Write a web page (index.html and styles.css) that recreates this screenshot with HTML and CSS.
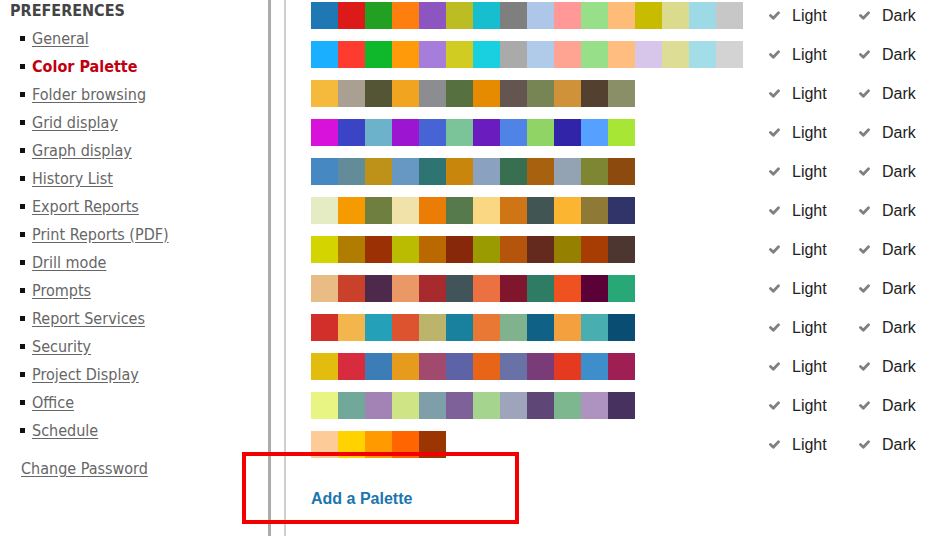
FILE: index.html
```html
<!DOCTYPE html>
<html>
<head>
<meta charset="utf-8">
<link rel="stylesheet" href="styles.css">
</head>
<body>
<div class="page">
  <aside class="sidebar">
    <div class="title">PREFERENCES</div>
    <ul class="nav">
      <li><span class="dot"></span><a href="#">General</a></li>
      <li class="active"><span class="dot"></span><a href="#">Color Palette</a></li>
      <li><span class="dot"></span><a href="#">Folder browsing</a></li>
      <li><span class="dot"></span><a href="#">Grid display</a></li>
      <li><span class="dot"></span><a href="#">Graph display</a></li>
      <li><span class="dot"></span><a href="#">History List</a></li>
      <li><span class="dot"></span><a href="#">Export Reports</a></li>
      <li><span class="dot"></span><a href="#">Print Reports (PDF)</a></li>
      <li><span class="dot"></span><a href="#">Drill mode</a></li>
      <li><span class="dot"></span><a href="#">Prompts</a></li>
      <li><span class="dot"></span><a href="#">Report Services</a></li>
      <li><span class="dot"></span><a href="#">Security</a></li>
      <li><span class="dot"></span><a href="#">Project Display</a></li>
      <li><span class="dot"></span><a href="#">Office</a></li>
      <li><span class="dot"></span><a href="#">Schedule</a></li>
    </ul>
    <a class="change" href="#">Change Password</a>
  </aside>
  <main class="content" id="content">
    <div id="rows"></div>
    <a class="add" href="#">Add a Palette</a>
  </main>
  <div class="highlight"></div>
</div>
<script src="app.js"></script>
</body>
</html>
```

FILE: styles.css
```css
html, body {
  margin: 0;
  padding: 0;
  background: #fff;
}
.page {
  display: flex;
  min-height: 536px;
  height: 536px;
  overflow: hidden;
  position: relative;
}
.sidebar {
  width: 268px;
  flex: none;
  border-right: 3px solid #ababab;
  font-family: "DejaVu Sans Condensed", "DejaVu Sans", sans-serif;
  font-stretch: condensed;
  font-size: 16px;
  color: #666;
}
.title {
  padding-left: 10px;
  font-weight: bold;
  color: #444;
  line-height: 21px;
}
.nav {
  list-style: none;
  margin: 3px 0 0;
  padding: 0 0 0 20px;
}
.nav li {
  display: flex;
  align-items: center;
  gap: 7px;
  height: 28px;
}
.dot {
  width: 5px;
  height: 5px;
  background: #111;
  flex: none;
}
.nav a {
  color: #666;
  text-decoration: underline;
  text-underline-offset: 2px;
}
.nav li.active a {
  color: #c00010;
  font-weight: bold;
  text-decoration: none;
}
.change {
  display: block;
  margin: 11px 0 0 21px;
  line-height: 28px;
  color: #666;
  text-decoration: underline;
  text-underline-offset: 2px;
}
.content {
  margin-left: 13px;
  border-left: 2px solid #cfcfcf;
  padding-left: 25px;
  flex: 1;
  font-family: "Liberation Sans", Arial, sans-serif;
  font-size: 16px;
}
.row {
  display: flex;
  align-items: flex-start;
  height: 39px;
}
.swatches {
  display: flex;
  width: 458px;
  margin-top: 2px;
}
.sw {
  width: 27px;
  height: 27px;
  flex: none;
}
.opt {
  display: flex;
  align-items: center;
  width: 90px;
  height: 27px;
  margin-top: 2px;
  color: #222;
}
.opt svg {
  width: 11px;
  height: 9px;
  margin-right: 12px;
  flex: none;
}
.add {
  display: block;
  margin-top: 21px;
  line-height: 20px;
  font-weight: bold;
  color: #1b75ae;
  text-decoration: none;
  width: max-content;
}
.highlight {
  position: absolute;
  left: 242px;
  top: 452px;
  width: 269px;
  height: 64px;
  border: 4px solid #f20000;
}
```

FILE: app.js
```js
var palettes = [
  ["#1f77b4","#dc1a1a","#22a022","#ff7f0e","#8c55c0","#bcbd22","#17becf","#7f7f7f","#aec7e8","#ff9896","#98df8a","#ffbb78","#c8bc00","#dbdb8d","#9edae5","#c7c7c7"],
  ["#1ab0ff","#ff3a2e","#0fb82a","#ff9a0a","#a67ddb","#d0cc22","#18d0e0","#aaaaaa","#b0cbea","#ffa393","#98df8a","#ffbe80","#d7c6ea","#dedd95","#a2dde8","#d3d3d3"],
  ["#f5b93c","#aaa092","#545535","#f0a420","#8b8d91","#56703f","#e68a00","#645550","#768553","#d09238","#53402f","#8b8f68"],
  ["#d812db","#3a44c4","#6cb2cb","#9c16d1","#4664d4","#7bc499","#6a1cbf","#4f83e6","#90d466","#3124a8","#56a0ff","#a8e636"],
  ["#4588c2","#628c9a","#be9219","#6698c3","#2e7472","#c8860c","#8aa2c0","#386f50","#a8620f","#93a3b3","#7e8634","#8c4a0e"],
  ["#e5ecc4","#f59a00","#6e7f3f","#f0e2a8","#eb7c06","#567a4b","#fad883","#cf7515","#415653","#fbb530","#8e7a36","#303469"],
  ["#d4d500","#b07d00","#9c3005","#b9bc00","#b96900","#88280a","#9a9b00","#b5540b","#652a1e","#958000","#a83d04","#4d3530"],
  ["#e8bc84","#c9402b","#4d2a4b","#ea9966","#a72a2f","#40545a","#ec7142","#80162d","#2e7c64","#ef5121","#5c0137","#28a876"],
  ["#d22f2b","#f2b64c","#24a0b9","#dd532f","#bdb46c","#19809d","#e97835","#80b28d","#106186","#f5a03e","#49aeaf","#094d73"],
  ["#e2bc0f","#d72c3e","#3c7db8","#e69b1d","#a24a6e","#5e62a6","#e86517","#6872a6","#7a3c78","#e53920","#3d8ecb","#9f1e53"],
  ["#e9f583","#71a89a","#a383b5","#cfe585","#7e9faa","#7d6198","#a4d48e","#9fa4bd","#5e4676","#7cb78f","#ae93c0","#47325f"],
  ["#fccb98","#ffd200","#ff9a00","#ff6500","#9b3502"]
];
var check = '<svg viewBox="0 0 11 9"><polyline points="1.5,4.5 4.3,7.2 9.5,1.8" fill="none" stroke="#808080" stroke-width="2.8" stroke-linecap="round" stroke-linejoin="round"/></svg>';
var html = "";
palettes.forEach(function (p) {
  html += '<div class="row"><div class="swatches">';
  p.forEach(function (c) {
    html += '<div class="sw" style="background:' + c + '"></div>';
  });
  html += '</div><div class="opt">' + check + '<span>Light</span></div><div class="opt">' + check + '<span>Dark</span></div></div>';
});
document.getElementById("rows").innerHTML = html;
```
